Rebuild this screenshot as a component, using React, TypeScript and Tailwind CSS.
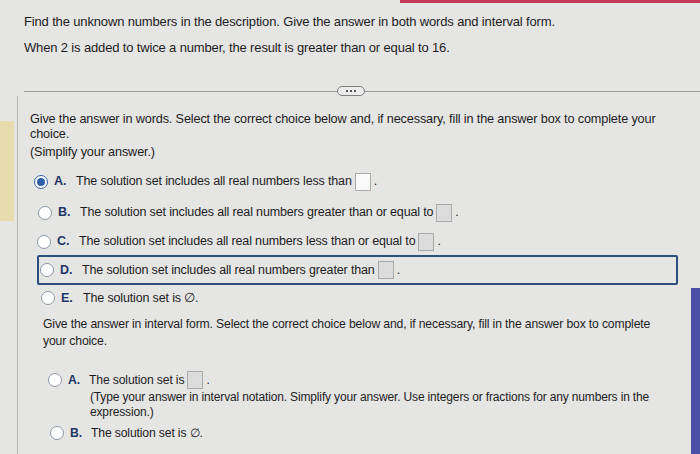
import React from "react";

const Radio = ({ checked = false }: { checked?: boolean }) => (
  <span
    className={
      "inline-flex items-center justify-center w-[14px] h-[14px] rounded-full bg-white shrink-0 " +
      (checked ? "border-[1.5px] border-[#2f5fa8]" : "border-[1.5px] border-[#8c97a8]")
    }
  >
    {checked && <span className="w-[8px] h-[8px] rounded-full bg-[#2f5fa8]" />}
  </span>
);

const Box = ({ white = false }: { white?: boolean }) => (
  <span
    className={
      "inline-block align-middle w-[16px] h-[18px] border border-[#a9a9a9] " +
      (white ? "bg-[#fafafa]" : "bg-[#dcdcdc]")
    }
  />
);

const Option = ({
  letter,
  children,
  checked,
  className = "",
  h = "h-[29px]",
  labelW = "w-[22px]",
}: {
  letter: string;
  children: React.ReactNode;
  checked?: boolean;
  className?: string;
  h?: string;
  labelW?: string;
}) => (
  <div className={"flex items-center " + h + " " + className}>
    <Radio checked={checked} />
    <span className={"ml-[6px] font-bold text-[#1f3566] " + labelW}>{letter}</span>
    <span className="flex items-center gap-[3px] whitespace-nowrap">{children}</span>
  </div>
);

export default function App() {
  return (
    <div
      className="relative w-[700px] h-[454px] overflow-hidden bg-[#e5e5e3] text-[#1d1d1f] text-[12.5px] tracking-[-0.15px]"
      style={{ fontFamily: '"Liberation Sans", Arial, sans-serif' }}
    >
      <div className="absolute top-0 right-0 w-[300px] h-[3px] bg-[#c23a5c]" />
      <div className="absolute top-[288px] right-0 w-[9px] h-[166px] bg-[#4b4fa6]" />

      <div className="pl-[24px] pt-[14px] text-[13px]">
        <p className="leading-[16px] whitespace-nowrap">
          Find the unknown numbers in the description. Give the answer in both words and interval form.
        </p>
        <p className="mt-[10px] leading-[16px] whitespace-nowrap">
          When 2 is added to twice a number, the result is greater than or equal to 16.
        </p>
      </div>

      <div className="flex items-center pl-[24px] mt-[30px] h-[10px]">
        <div className="w-[313px] h-[1px] bg-[#9c9c9c]" />
        <div className="flex items-center justify-center gap-[2px] w-[28px] h-[10px] rounded-full border border-[#7f7f7f] bg-[#ececec]">
          <span className="w-[2px] h-[2px] bg-[#555]" />
          <span className="w-[2px] h-[2px] bg-[#555]" />
          <span className="w-[2px] h-[2px] bg-[#555]" />
        </div>
        <div className="flex-1 h-[1px] bg-[#9c9c9c]" />
      </div>

      <div className="flex h-[370px]">
        <div className="w-[18px] flex flex-col border-r border-[#b8b8b8]">
          <div className="h-[25px]" />
          <div className="w-[14px] h-[100px] bg-[#e8dcae]" />
        </div>

        <div className="flex-1 pt-[16px]">
          <div className="pl-[12px] text-[12.7px]">
            <p className="leading-[15px] whitespace-nowrap">
              Give the answer in words. Select the correct choice below and, if necessary, fill in the answer box to complete your
              <br />
              choice.
            </p>
            <p className="mt-[2px] leading-[16px]">(Simplify your answer.)</p>
          </div>

          <div className="mt-[7px] pl-[16px]">
            <Option letter="A." checked>
              The solution set includes all real numbers less than <Box white />.
            </Option>
            <Option letter="B." className="mt-[2px] pl-[4px]">
              The solution set includes all real numbers greater than or equal to <Box />.
            </Option>
            <Option letter="C." className="pl-[3px]">
              The solution set includes all real numbers less than or equal to <Box />.
            </Option>
            <div className="ml-[3px] mr-[22px] mt-[-1px] border-2 border-[#2e4f7e] rounded-[2px] h-[30px] flex items-center">
              <Option letter="D." className="pl-[1px]">
                The solution set includes all real numbers greater than <Box />.
              </Option>
            </div>
            <Option letter="E." h="h-[26px]" className="pl-[7px]">
              The solution set is ∅.
            </Option>
          </div>

          <div className="pl-[25px] mt-[5px] text-[12.2px]">
            <p className="leading-[17px] whitespace-nowrap">
              Give the answer in interval form. Select the correct choice below and, if necessary, fill in the answer box to complete
              <br />
              your choice.
            </p>
          </div>

          <div className="pl-[30px] mt-[22px] text-[12.2px]">
            <Option letter="A." h="h-[16px]" labelW="w-[21px]">
              The solution set is <Box />.
            </Option>
            <div className="pl-[42px] mt-[2px] leading-[15px] whitespace-nowrap text-[12px]">
              (Type your answer in interval notation. Simplify your answer. Use integers or fractions for any numbers in the
              <br />
              expression.)
            </div>
            <Option letter="B." h="h-[26px]" className="mt-[0px] pl-[2px]" labelW="w-[21px]">
              The solution set is ∅.
            </Option>
          </div>
        </div>
      </div>
    </div>
  );
}
